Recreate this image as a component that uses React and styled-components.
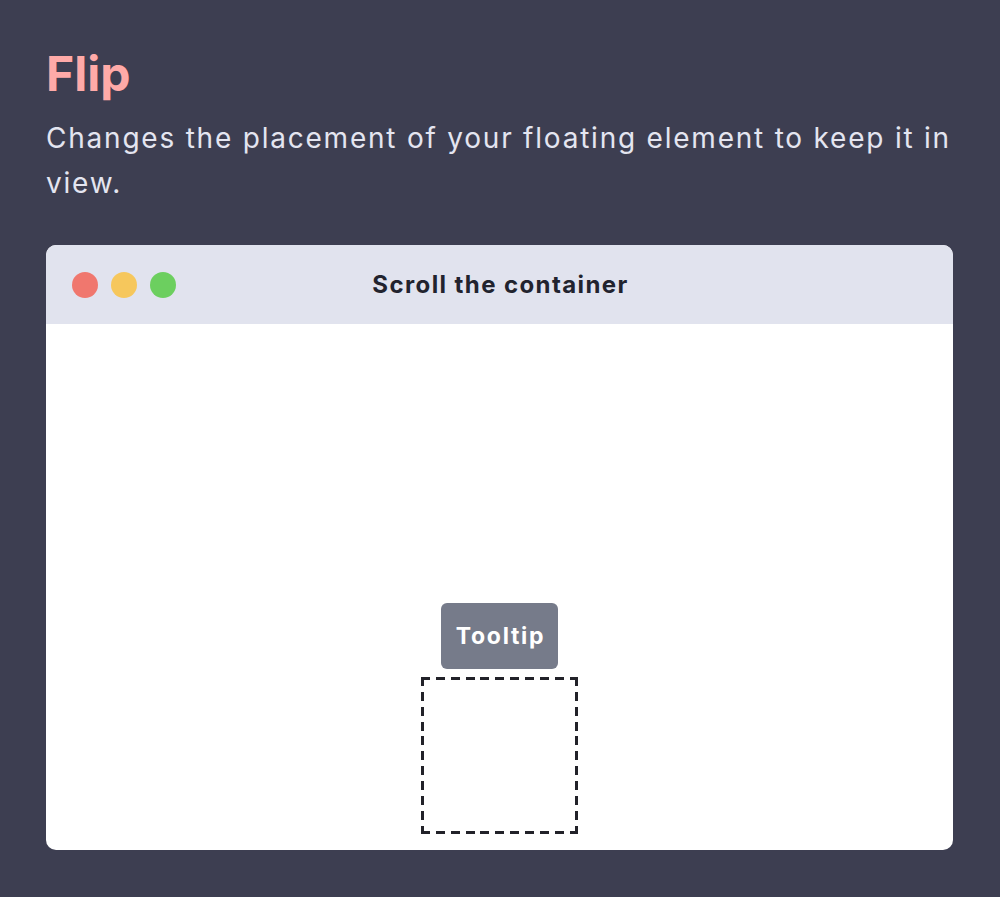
import { createGlobalStyle, styled } from "styled-components";

const GlobalStyle = createGlobalStyle`
  html, body {
    margin: 0;
    background: #3d3e51;
  }
  body {
    font-family: Inter, "Noto Sans", sans-serif;
  }
`;

export default function App() {
  return (
    <>
      <GlobalStyle />
      <Page>
        <Title>Flip</Title>
        <Description>
          Changes the placement of your floating element to keep it in view.
        </Description>
        <Window>
          <TitleBar>
            <Dots>
              <Dot color="#f0776e" />
              <Dot color="#f6c75c" />
              <Dot color="#6ccf5f" />
            </Dots>
            <WindowTitle>Scroll the container</WindowTitle>
          </TitleBar>
          <Viewport>
            <Tooltip>Tooltip</Tooltip>
            <Reference />
          </Viewport>
        </Window>
      </Page>
    </>
  );
}

const Page = styled.div`
  padding: 40px 47px 47px 46px;
  min-height: 897px;
  box-sizing: border-box;
`;

const Title = styled.h1`
  margin: 0;
  font-size: 48px;
  font-weight: 700;
  line-height: 1.4;
  color: #ffaaa8;
`;

const Description = styled.p`
  margin: 9px 0 0;
  font-size: 28px;
  line-height: 45px;
  letter-spacing: 1.78px;
  color: #e4e5f0;
`;

const Window = styled.div`
  margin-top: 39px;
  background: #fff;
  border-radius: 10px;
  overflow: hidden;
`;

const TitleBar = styled.div`
  position: relative;
  height: 79px;
  background: #e1e3ee;
  display: flex;
  align-items: center;
  justify-content: center;
`;

const Dots = styled.div`
  position: absolute;
  left: 26px;
  top: 0;
  bottom: 0;
  display: flex;
  align-items: center;
  gap: 13px;
`;

const Dot = styled.span`
  width: 26px;
  height: 26px;
  border-radius: 50%;
  background: ${(props) => props.color};
`;

const WindowTitle = styled.div`
  font-size: 24px;
  font-weight: 700;
  letter-spacing: 1.4px;
  color: #22232e;
  padding-left: 2px;
`;

const Viewport = styled.div`
  height: 526px;
  display: flex;
  flex-direction: column;
  align-items: center;
  justify-content: flex-end;
  gap: 8px;
  padding-bottom: 16px;
  box-sizing: border-box;
`;

const Tooltip = styled.div`
  width: 117px;
  height: 66px;
  display: flex;
  align-items: center;
  justify-content: center;
  background: #767b8a;
  border-radius: 6px;
  color: #fff;
  font-size: 23px;
  font-weight: 700;
  letter-spacing: 1.7px;
  padding-left: 2px;
  box-sizing: border-box;
`;

const dash = "#222229 0 9px, transparent 9px 14.86px";

const Reference = styled.div`
  width: 157px;
  height: 157px;
  background:
    repeating-linear-gradient(to right, ${dash}) top left / 100% 3px no-repeat,
    repeating-linear-gradient(to right, ${dash}) bottom left / 100% 3px no-repeat,
    repeating-linear-gradient(to bottom, ${dash}) top left / 3px 100% no-repeat,
    repeating-linear-gradient(to bottom, ${dash}) top right / 3px 100% no-repeat;
`;
